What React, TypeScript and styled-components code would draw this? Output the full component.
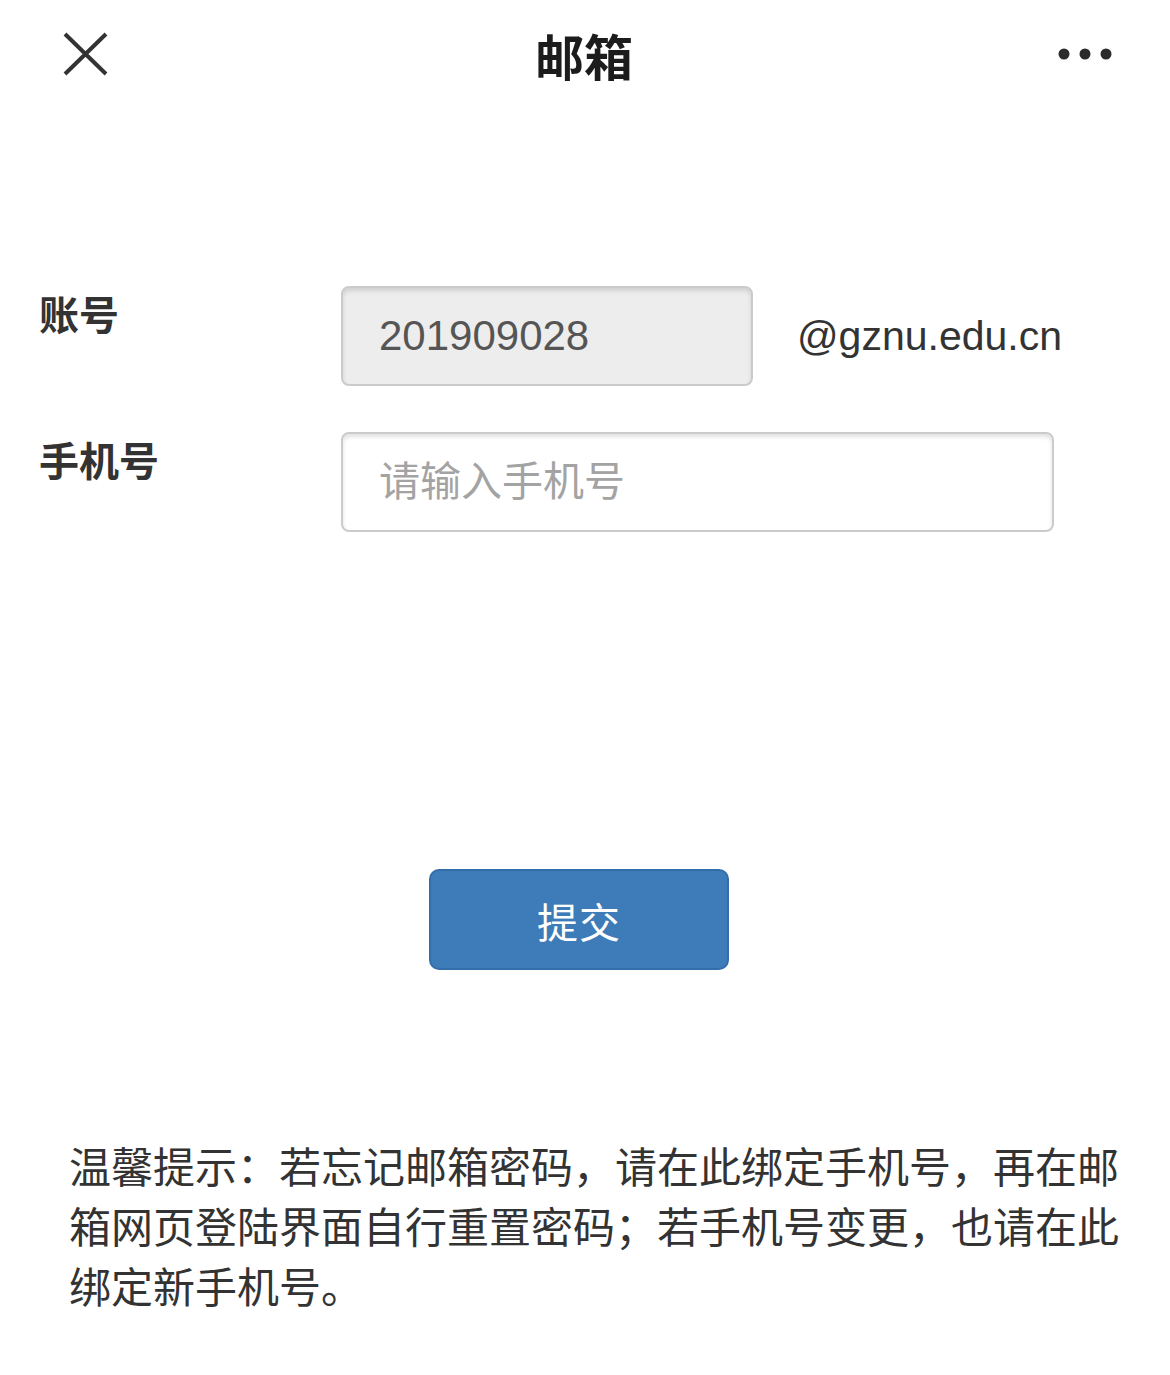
import React from 'react';
import styled, { createGlobalStyle } from 'styled-components';

const GlobalStyle = createGlobalStyle`
  html, body {
    margin: 0;
    padding: 0;
    background: #ffffff;
  }
  body {
    font-family: "Noto Sans CJK SC", "Noto Sans", "Liberation Sans", sans-serif;
    color: #333;
  }
`;

const Page = styled.div`
  width: 1170px;
  min-height: 1375px;
  background: #fff;
`;

const Header = styled.div`
  height: 108px;
  display: flex;
  align-items: center;
  justify-content: space-between;
  padding: 0 58px 0 60px;
  box-sizing: border-box;
`;

const IconButton = styled.div<{ $w?: number }>`
  width: ${(p) => p.$w ?? 50}px;
  height: 50px;
  display: flex;
  align-items: center;
  justify-content: center;
`;

const Title = styled.div`
  font-size: 49px;
  font-weight: 700;
  color: #1c1c1c;
  margin-left: 0;
`;

const Form = styled.div`
  margin-top: 178px;
  padding: 0 40px;
  display: flex;
  flex-direction: column;
  gap: 46px;
`;

const Row = styled.div`
  display: grid;
  grid-template-columns: 301px auto;
  align-items: start;
`;

const Label = styled.div`
  font-size: 40px;
  font-weight: 700;
  color: #333;
  line-height: 48px;
  padding-top: 3px;
  margin-left: -1px;
`;

const Field = styled.div`
  display: flex;
  align-items: center;
  gap: 44px;
`;

const Input = styled.input<{ $w: number; $readonly?: boolean }>`
  width: ${(p) => p.$w}px;
  height: 100px;
  box-sizing: border-box;
  border: 2px solid #cbcbcb;
  border-radius: 8px;
  background: ${(p) => (p.$readonly ? '#ededed' : '#fff')};
  box-shadow: inset 0 3px 4px rgba(0, 0, 0, 0.12);
  padding: 0 0 0 36px;
  font-family: "Liberation Sans", "Noto Sans CJK SC", sans-serif;
  font-size: 42px;
  color: #555;
  outline: none;
  &::placeholder {
    font-family: "Noto Sans CJK SC", sans-serif;
    font-size: 41px;
    color: #a3a3a3;
  }
`;

const Suffix = styled.div`
  font-family: "Liberation Sans", sans-serif;
  font-size: 41px;
  color: #333;
`;

const ButtonWrap = styled.div`
  margin-top: 337px;
  padding-left: 429px;
`;

const Submit = styled.button`
  width: 300px;
  height: 101px;
  border: 2px solid #336ea9;
  border-radius: 10px;
  background: #3e7bb9;
  color: #fff;
  font-family: "Noto Sans CJK SC", sans-serif;
  font-size: 41px;
  letter-spacing: 1px;
`;

const Tip = styled.p`
  margin: 165px 0 0 69px;
  width: 1050px;
  font-size: 42px;
  line-height: 60px;
  color: #333;
`;

const CloseIcon = () => (
  <svg width="46" height="44" viewBox="0 0 46 44">
    <path d="M3 2 L44 42 M44 2 L3 42" stroke="#333" strokeWidth="4" fill="none" />
  </svg>
);

const MoreIcon = () => (
  <svg width="54" height="14" viewBox="0 0 54 14">
    <circle cx="6" cy="7" r="5.5" fill="#2b2b2b" />
    <circle cx="27" cy="7" r="5.5" fill="#2b2b2b" />
    <circle cx="48" cy="7" r="5.5" fill="#2b2b2b" />
  </svg>
);

const App: React.FunctionComponent = () => {
  return (
    <>
      <GlobalStyle />
      <Page>
        <Header>
          <IconButton><CloseIcon /></IconButton>
          <Title>邮箱</Title>
          <IconButton $w={54}><MoreIcon /></IconButton>
        </Header>

        <Form>
          <Row>
            <Label>账号</Label>
            <Field>
              <Input $w={412} $readonly readOnly value="201909028" />
              <Suffix>@gznu.edu.cn</Suffix>
            </Field>
          </Row>
          <Row>
            <Label>手机号</Label>
            <Field>
              <Input $w={713} placeholder="请输入手机号" />
            </Field>
          </Row>
        </Form>

        <ButtonWrap>
          <Submit>提交</Submit>
        </ButtonWrap>

        <Tip>
          温馨提示：若忘记邮箱密码，请在此绑定手机号，再在邮箱网页登陆界面自行重置密码；若手机号变更，也请在此绑定新手机号。
        </Tip>
      </Page>
    </>
  );
};

export default App;
